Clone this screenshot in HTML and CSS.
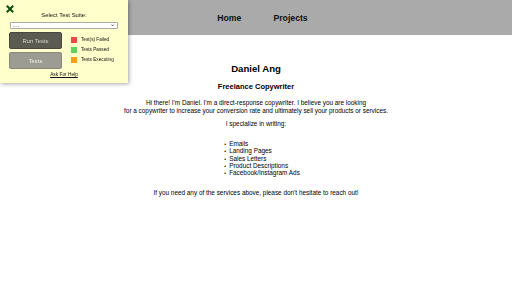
FILE: index.html
```html
<!DOCTYPE html>
<html>
<head>
<meta charset="utf-8">
<link rel="stylesheet" href="styles.css">
</head>
<body>
<header class="topbar">
  <nav class="nav">
    <a class="nav-link" href="#">Home</a>
    <a class="nav-link" href="#">Projects</a>
  </nav>
</header>
<main class="content">
  <h1 class="name">Daniel Ang</h1>
  <h2 class="role">Freelance Copywriter</h2>
  <p class="intro">Hi there! I'm Daniel. I'm a direct-response copywriter. I believe you are looking<br>for a copywriter to increase your conversion rate and ultimately sell your products or services.</p>
  <p class="lead">I specialize in writing:</p>
  <ul class="services">
    <li>Emails</li>
    <li>Landing Pages</li>
    <li>Sales Letters</li>
    <li>Product Descriptions</li>
    <li>Facebook/Instagram Ads</li>
  </ul>
  <p class="outro">If you need any of the services above, please don't hesitate to reach out!</p>
</main>

<div class="test-panel">
  <div class="close">
    <svg width="8" height="8" viewBox="0 0 8 8"><path d="M0.8 0.8 L7.2 7.2 M7.2 0.8 L0.8 7.2" stroke="#0a4d0a" stroke-width="2" stroke-linecap="butt"/></svg>
  </div>
  <div class="suite-label">Select Test Suite:</div>
  <div class="suite-select"><span class="dots">- - -</span><span class="caret">⌄</span></div>
  <div class="panel-row">
    <div class="buttons">
      <div class="btn btn-run">Run Tests</div>
      <div class="btn btn-tests">Tests</div>
    </div>
    <div class="legend">
      <div class="legend-item"><span class="sq sq-red"></span>Test(s) Failed</div>
      <div class="legend-item"><span class="sq sq-green"></span>Tests Passed</div>
      <div class="legend-item"><span class="sq sq-orange"></span>Tests Executing</div>
    </div>
  </div>
  <a class="help" href="#">Ask For Help</a>
</div>
</body>
</html>
```
FILE: styles.css
```css
html, body {
  margin: 0;
  padding: 0;
  background: #fff;
  font-family: "Liberation Sans", Arial, sans-serif;
  color: #000;
}
.topbar {
  height: 35px;
  background: #aaaaaa;
  display: flex;
  align-items: center;
  justify-content: center;
}
.nav {
  display: flex;
  gap: 32px;
  padding-left: 13px;
}
.nav-link {
  font-size: 8.7px;
  font-weight: bold;
  color: #111;
  text-decoration: none;
}
.content {
  text-align: center;
  font-size: 6.4px;
  line-height: 8px;
}
.name {
  font-size: 9.6px;
  line-height: 11px;
  margin: 28px 0 0;
}
.role {
  font-size: 7.5px;
  line-height: 9px;
  margin: 8px 0 0;
}
.intro {
  margin: 8px 0 0;
}
.lead {
  margin: 5px 0 0;
}
.services {
  display: inline-block;
  text-align: left;
  margin: 12px 0 0;
  padding-left: 12px;
  line-height: 7.3px;
  list-style: none;
}
.services li {
  height: 7.3px;
}
.services li::before {
  content: "•";
  display: inline-block;
  width: 5px;
  font-size: 5px;
  line-height: 0;
}
.outro {
  margin: 12px 0 0;
}

.test-panel {
  position: fixed;
  top: 0;
  left: 0;
  width: 128px;
  height: 83px;
  background: #ffffcc;
  box-shadow: 1px 1px 4px rgba(0,0,0,0.35);
  box-sizing: border-box;
  display: flex;
  flex-direction: column;
  align-items: center;
}
.close {
  position: absolute;
  top: 5px;
  left: 5.5px;
  width: 8px;
  height: 8px;
}
.close svg { display: block; }
.suite-label {
  margin-top: 12px;
  font-size: 5.9px;
  line-height: 7px;
  color: #111;
}
.suite-select {
  margin-top: 3px;
  width: 108px;
  height: 7px;
  box-sizing: border-box;
  background: #fff;
  border: 1px solid #aaa;
  border-radius: 1px;
  display: flex;
  align-items: center;
  justify-content: space-between;
  padding: 0 2px;
  font-size: 4px;
  color: #555;
}
.caret {
  font-size: 6px;
  line-height: 4px;
  margin-top: -3px;
  color: #222;
}
.panel-row {
  margin-top: 3px;
  width: 110px;
  display: flex;
  gap: 9px;
}
.buttons {
  display: flex;
  flex-direction: column;
  gap: 3px;
}
.btn {
  width: 53px;
  height: 17px;
  border-radius: 2px;
  display: flex;
  align-items: center;
  justify-content: center;
  font-size: 5.9px;
  box-sizing: border-box;
}
.btn-run {
  background: #5b5b51;
  color: #d6d6cc;
  border: 1px solid #47473f;
}
.btn-tests {
  background: #9c9c92;
  color: #eeeee4;
  border: 1px solid #88887e;
}
.legend {
  display: flex;
  flex-direction: column;
  gap: 4px;
  padding-top: 5px;
}
.legend-item {
  display: flex;
  align-items: center;
  gap: 4px;
  font-size: 4.7px;
  line-height: 6px;
  color: #111;
}
.sq {
  width: 6px;
  height: 6px;
  display: inline-block;
}
.sq-red { background: #e84a4a; }
.sq-green { background: #5dd35d; }
.sq-orange { background: #f0a020; }
.help {
  margin-top: 3px;
  font-size: 4.8px;
  color: #111;
  text-decoration: underline;
}
```
